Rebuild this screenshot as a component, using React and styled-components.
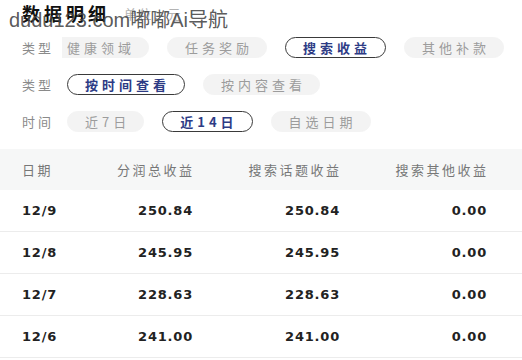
import styled, { createGlobalStyle } from 'styled-components';

const GlobalStyle = createGlobalStyle`
    body{
        margin:0;
        background:#fff;
        font-family:"Noto Sans CJK SC","Noto Sans",sans-serif;
    }
`;
const Page = styled.div`
    position:relative;
    width:522px;
    height:360px;
    overflow:hidden;
    background:#fff;
`;
const Header = styled.div`
    display:flex;
    align-items:center;
    height:24px;
    padding:1px 22px 0;
`;
const Title = styled.div`
    font-size:18px;
    font-weight:bold;
    letter-spacing:4px;
    color:#111;
    line-height:24px;
`;
const Unit = styled.div`
    margin-left:14px;
    font-size:13px;
    letter-spacing:1.5px;
    color:#b3b3b3;
`;
const Watermark = styled.div`
    position:absolute;
    top:10px;
    left:9px;
    font-family:"Liberation Sans","Noto Sans CJK SC",sans-serif;
    font-size:20px;
    line-height:1;
    color:rgba(70,70,70,0.9);
    pointer-events:none;
`;
const Filters = styled.div`
    display:flex;
    flex-direction:column;
    gap:16px;
    padding-top:12px;
`;
const FilterRow = styled.div`
    display:flex;
    align-items:center;
    height:21px;
    padding-left:22px;
`;
const Label = styled.div`
    width:40px;
    flex-shrink:0;
    font-size:13px;
    letter-spacing:3px;
    color:#8a8a8a;
`;
const ChipScroll = styled.div`
    flex:1;
    overflow:hidden;
`;
const ChipTrack = styled.div`
    display:flex;
    gap:18px;
    margin-left:${p => p.$offset}px;
`;
const Chip = styled.div`
    flex-shrink:0;
    box-sizing:border-box;
    height:21px;
    display:flex;
    align-items:center;
    border-radius:11px;
    font-size:13px;
    letter-spacing:4px;
    white-space:nowrap;
    padding:${p => p.$active ? '0 14px 0 17px' : '0 13px 0 17px'};
    border:1px solid ${p => p.$active ? '#3a3a3a' : '#f3f3f3'};
    background:${p => p.$active ? '#fff' : '#f3f3f3'};
    color:${p => p.$active ? '#2d3b85' : '#9c9c9c'};
    font-weight:${p => p.$active ? 'bold' : 'normal'};
`;
const Table = styled.div`
    margin-top:17px;
`;
const Row = styled.div`
    display:grid;
    grid-template-columns:70px 100px 147px 147px;
    align-items:center;
    box-sizing:border-box;
    padding-left:22px;
    height:${p => p.$head ? 41 : 42}px;
    background:${p => p.$head ? '#f6f7f7' : '#fff'};
    border-bottom:${p => p.$head ? 'none' : '1px solid #ececec'};
`;
const HeadCell = styled.div`
    font-size:13px;
    letter-spacing:2.5px;
    color:#777;
    text-align:${p => p.$left ? 'left' : 'right'};
    margin-right:${p => p.$left ? 0 : -2.5}px;
`;
const Cell = styled.div`
    font-family:"DejaVu Sans","Liberation Sans",sans-serif;
    font-size:13px;
    font-weight:bold;
    letter-spacing:0.8px;
    color:#222;
    text-align:${p => p.$left ? 'left' : 'right'};
    margin-right:${p => p.$left ? 0 : -1}px;
`;

const filters = [
    { label: '类型', offset: -13, items: ['健康领域', '任务奖励', '搜索收益', '其他补款'], active: 2 },
    { label: '类型', offset: 5, items: ['按时间查看', '按内容查看'], active: 0 },
    { label: '时间', offset: 5, items: ['近7日', '近14日', '自选日期'], active: 1 },
];

const rows = [
    ['12/9', '250.84', '250.84', '0.00'],
    ['12/8', '245.95', '245.95', '0.00'],
    ['12/7', '228.63', '228.63', '0.00'],
    ['12/6', '241.00', '241.00', '0.00'],
];

const App = () => {
    return (
        <Page>
            <GlobalStyle/>
            <Header>
                <Title>数据明细</Title>
                <Unit>单位：元</Unit>
            </Header>
            <Filters>
                {filters.map((f, i) => (
                    <FilterRow key={i}>
                        <Label>{f.label}</Label>
                        <ChipScroll>
                            <ChipTrack $offset={f.offset}>
                                {f.items.map((item, j) => (
                                    <Chip key={item} $active={j === f.active}>{item}</Chip>
                                ))}
                            </ChipTrack>
                        </ChipScroll>
                    </FilterRow>
                ))}
            </Filters>
            <Table>
                <Row $head>
                    <HeadCell $left>日期</HeadCell>
                    <HeadCell>分润总收益</HeadCell>
                    <HeadCell>搜索话题收益</HeadCell>
                    <HeadCell>搜索其他收益</HeadCell>
                </Row>
                {rows.map(r => (
                    <Row key={r[0]}>
                        {r.map((v, k) => (
                            <Cell key={k} $left={k === 0}>{v}</Cell>
                        ))}
                    </Row>
                ))}
            </Table>
            <Watermark>dudu123.com嘟嘟Ai导航</Watermark>
        </Page>
    )
}

export default App
